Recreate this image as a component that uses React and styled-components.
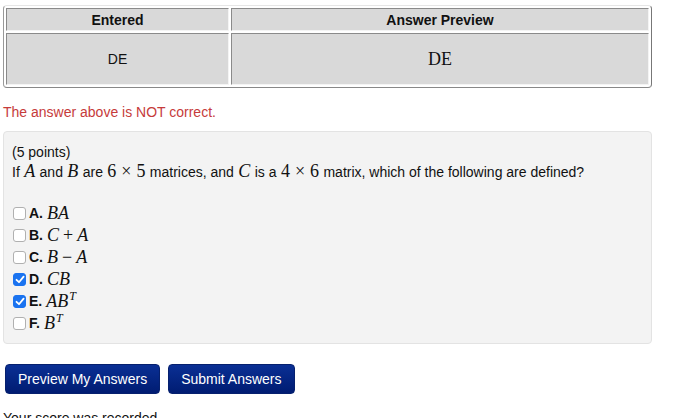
import React from "react";
import styled, { createGlobalStyle } from "styled-components";

const Global = createGlobalStyle`
  html, body { margin: 0; padding: 0; background: #fff; }
  body {
    font-family: "Liberation Sans", Arial, Helvetica, sans-serif;
    font-size: 14px;
    line-height: 20px;
    color: #111;
  }
`;

const Page = styled.div`
  padding: 5px 24px 0 3px;
  width: 649px;
`;

const Table = styled.table`
  width: 649px;
  border-collapse: separate;
  border-spacing: 2px;
  border: 1px solid;
  border-color: #e6e6e6 #777 #888 #999;
  border-radius: 4px;
  margin: 0;
`;

const HeadCell = styled.th`
  background: #d9d9d9;
  border: 1px solid;
  border-color: #8a8a8a #f4f4f4 #f4f4f4 #8a8a8a;
  height: 21px;
  padding: 0;
  font-size: 14px;
  font-weight: bold;
  text-align: center;
  width: ${(p) => p.$w};
`;

const BodyCell = styled.td`
  background: #d9d9d9;
  border: 1px solid;
  border-color: #8a8a8a #f4f4f4 #f4f4f4 #8a8a8a;
  height: 50px;
  padding: 0;
  text-align: center;
  font-family: ${(p) => (p.$math ? '"Liberation Serif", "Times New Roman", serif' : "inherit")};
  font-size: ${(p) => (p.$math ? "18px" : "14px")};
`;

const Feedback = styled.div`
  color: #c63b3b;
  margin-top: 14px;
  height: 20px;
`;

const Well = styled.div`
  margin-top: 9px;
  background: #f3f3f3;
  border: 1px solid #e3e3e3;
  border-radius: 4px;
  padding: 11px 9px 9px 8px;
`;

const Line = styled.div`
  height: 19px;
  line-height: 19px;
  white-space: nowrap;
`;

const Math = styled.span`
  font-family: "Liberation Serif", "Times New Roman", serif;
  font-size: 18px;
  line-height: 1;
  margin: ${(p) => (p.$inline ? "0 0.5px" : "0")};
`;

const V = styled.i`
  font-style: italic;
`;

const Op = styled.span`
  font-style: normal;
  padding: ${(p) => (p.$wide ? "0 5px" : "0 4px")};
`;

const Sup = styled.sup`
  font-style: italic;
  font-size: 12px;
  line-height: 0;
  vertical-align: 7px;
  margin-left: 1px;
`;

const Choices = styled.div`
  margin-top: 21px;
  display: flex;
  flex-direction: column;
`;

const Choice = styled.label`
  display: flex;
  align-items: center;
  height: 22px;
`;

const Box = styled.span`
  flex: none;
  width: 13px;
  height: 13px;
  box-sizing: border-box;
  border-radius: 3px;
  margin: 1px 3px 0 1px;
  display: inline-flex;
  align-items: center;
  justify-content: center;
  background: ${(p) => (p.$checked ? "#1a73f0" : "#fff")};
  border: 1px solid ${(p) => (p.$checked ? "#1a73f0" : "#b0b0b0")};
`;

const Letter = styled.span`
  font-weight: bold;
  margin-right: 4px;
`;

const Buttons = styled.div`
  display: flex;
  gap: 8px;
  margin: 20px 0 0 2px;
`;

const Button = styled.button`
  font-family: "Liberation Sans", Arial, Helvetica, sans-serif;
  font-size: 14px;
  line-height: 20px;
  color: #fff;
  padding: 4px 12px;
  height: 30px;
  border-radius: 4px;
  border: 1px solid #06206e;
  background: linear-gradient(to bottom, #0a2f94, #001c72);
  cursor: pointer;
`;

const Recorded = styled.div`
  margin-top: 14px;
`;

const Check = () => (
  <svg width="10" height="9" viewBox="0 0 10 9">
    <path d="M1.5 4.8 L4 7.2 L8.6 1.6" fill="none" stroke="#fff" strokeWidth="1.8" strokeLinecap="round" strokeLinejoin="round" />
  </svg>
);

const choices = [
  { l: "A.", m: <Math><V>BA</V></Math>, c: false },
  { l: "B.", m: <Math><V>C</V><Op>+</Op><V>A</V></Math>, c: false },
  { l: "C.", m: <Math><V>B</V><Op>−</Op><V>A</V></Math>, c: false },
  { l: "D.", m: <Math><V>CB</V></Math>, c: true },
  { l: "E.", m: <Math><V>AB</V><Sup>T</Sup></Math>, c: true },
  { l: "F.", m: <Math><V>B</V><Sup>T</Sup></Math>, c: false },
];

export default function App() {
  return (
    <>
      <Global />
      <Page>
        <Table>
          <thead>
            <tr>
              <HeadCell $w="221px">Entered</HeadCell>
              <HeadCell>Answer Preview</HeadCell>
            </tr>
          </thead>
          <tbody>
            <tr>
              <BodyCell>DE</BodyCell>
              <BodyCell $math>DE</BodyCell>
            </tr>
          </tbody>
        </Table>
        <Feedback>The answer above is NOT correct.</Feedback>
        <Well>
          <Line>(5 points)</Line>
          <Line>
            If <Math $inline><V>A</V></Math> and <Math $inline><V>B</V></Math> are{" "}
            <Math $inline>6<Op $wide>×</Op>5</Math> matrices, and <Math $inline><V>C</V></Math> is a{" "}
            <Math $inline>4<Op $wide>×</Op>6</Math> matrix, which of the following are defined?
          </Line>
          <Choices>
            {choices.map((ch) => (
              <Choice key={ch.l}>
                <Box $checked={ch.c}>{ch.c && <Check />}</Box>
                <Letter>{ch.l}</Letter>
                {ch.m}
              </Choice>
            ))}
          </Choices>
        </Well>
        <Buttons>
          <Button>Preview My Answers</Button>
          <Button>Submit Answers</Button>
        </Buttons>
        <Recorded>Your score was recorded.</Recorded>
      </Page>
    </>
  );
}
